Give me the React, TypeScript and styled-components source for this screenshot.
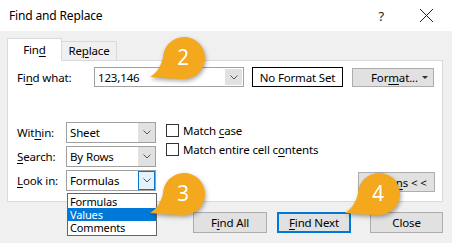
import styled, { createGlobalStyle } from "styled-components";

const GlobalStyle = createGlobalStyle`
  html, body {
    margin: 0;
    padding: 0;
    background: #f0f0f0;
  }
`;

const Window = styled.div`
  position: relative;
  width: 452px;
  height: 243px;
  overflow: hidden;
  background: #f0f0f0;
  font-family: "Noto Sans", "Open Sans", sans-serif;
  font-size: 11.5px;
  letter-spacing: -0.15px;
  color: #000;
`;

const TitleBar = styled.div`
  display: flex;
  align-items: center;
  height: 31px;
  padding: 0 18px 0 9px;
  background: #fff;
`;

const TitleText = styled.span`
  font-size: 12px;
`;

const TitleControls = styled.div`
  display: flex;
  align-items: center;
  gap: 35px;
  margin-left: auto;
  font-size: 13px;
  color: #222;
`;

const Main = styled.div`
  padding: 7px 0 0 7px;
`;

const TabStrip = styled.div`
  display: flex;
  align-items: flex-end;
  height: 22px;
`;

const Tab = styled.div<{ $active?: boolean }>`
  position: relative;
  z-index: ${(p) => (p.$active ? 2 : 1)};
  box-sizing: border-box;
  width: 55px;
  height: ${(p) => (p.$active ? "23px" : "19px")};
  margin-bottom: ${(p) => (p.$active ? "-1px" : "0")};
  padding-top: ${(p) => (p.$active ? "3px" : "1px")};
  text-align: center;
  background: ${(p) => (p.$active ? "#fff" : "#f0f0f0")};
  border: 1px solid #d9d9d9;
  border-bottom: none;
  border-left: ${(p) => (p.$active ? "1px solid #d9d9d9" : "none")};
`;

const Panel = styled.div`
  box-sizing: border-box;
  display: flex;
  flex-direction: column;
  width: 436px;
  height: 142px;
  padding: 6px 7px 9px 9px;
  background: #fff;
  border: 1px solid #d9d9d9;
`;

const FindRow = styled.div`
  display: flex;
  align-items: center;
  height: 20px;
`;

const Label = styled.span<{ $w: number }>`
  width: ${(p) => p.$w}px;
  flex-shrink: 0;
`;

const U = styled.span`
  text-decoration: underline;
  text-underline-offset: 2px;
`;

const Combo = styled.div<{ $w: number; $h: number }>`
  box-sizing: border-box;
  display: flex;
  align-items: stretch;
  width: ${(p) => p.$w}px;
  height: ${(p) => p.$h}px;
  background: #fff;
  border: 1px solid #a0a0a0;
`;

const ComboText = styled.span`
  flex: 1;
  display: flex;
  align-items: center;
  padding-left: 3px;
`;

const ArrowBox = styled.span<{ $open?: boolean; $inset?: boolean }>`
  box-sizing: border-box;
  display: flex;
  align-items: center;
  justify-content: center;
  width: 17px;
  margin: ${(p) => (p.$inset ? "1px" : "0")};
  background: ${(p) => (p.$open ? "#e5f1fb" : "#e1e1e1")};
  border: 1px solid ${(p) => (p.$open ? "#0078d7" : "#e1e1e1")};
`;

const FormatBox = styled.div`
  box-sizing: border-box;
  display: flex;
  align-items: center;
  justify-content: center;
  width: 91px;
  height: 20px;
  margin-left: 8px;
  border: 1px solid #000;
`;

const FormatButton = styled.div`
  box-sizing: border-box;
  display: flex;
  align-items: center;
  width: 82px;
  height: 19px;
  margin-left: 9px;
  padding-left: 18px;
  background: #e1e1e1;
  border: 1px solid #adadad;
`;

const Caret = styled.span`
  margin-left: auto;
  margin-right: 5px;
  width: 0;
  height: 0;
  border-left: 3px solid transparent;
  border-right: 3px solid transparent;
  border-top: 3px solid #333;
`;

const Lower = styled.div`
  display: flex;
  flex: 1;
  margin-top: 35px;
`;

const SelectGrid = styled.div`
  display: grid;
  grid-template-columns: 49px 90px;
  grid-auto-rows: 21px;
  row-gap: 3px;
  align-items: center;
`;

const SelectWrap = styled.div`
  position: relative;
  height: 21px;
`;

const DropList = styled.div`
  position: absolute;
  z-index: 5;
  top: calc(100% + 2px);
  left: 1px;
  box-sizing: border-box;
  width: 90px;
  padding: 1px 0;
  background: #fff;
  border: 1px solid #646464;
`;

const DropItem = styled.div<{ $selected?: boolean }>`
  height: 13px;
  line-height: 13px;
  padding-left: 2px;
  font-size: 11px;
  overflow: hidden;
  background: ${(p) => (p.$selected ? "#0078d7" : "transparent")};
  color: ${(p) => (p.$selected ? "#fff" : "#000")};
`;

const Checks = styled.div`
  display: flex;
  flex-direction: column;
  gap: 6px;
  margin-left: 10px;
  padding-top: 2px;
`;

const CheckRow = styled.label`
  display: flex;
  align-items: center;
  gap: 4px;
  height: 13px;
`;

const Box = styled.span`
  box-sizing: border-box;
  width: 13px;
  height: 13px;
  background: #fff;
  border: 1px solid #333;
`;

const Button = styled.div<{ $w: number; $default?: boolean; $gapLeft?: number }>`
  box-sizing: border-box;
  display: flex;
  align-items: center;
  justify-content: center;
  width: ${(p) => p.$w}px;
  height: 21px;
  margin-left: ${(p) => p.$gapLeft ?? 0}px;
  background: #e1e1e1;
  border: ${(p) => (p.$default ? "2px solid #0078d7" : "1px solid #adadad")};
`;

const OptionsButton = styled(Button)`
  align-self: flex-end;
  margin-left: auto;
  height: 20px;
`;

const ButtonRow = styled.div`
  display: flex;
  justify-content: flex-end;
  margin-top: 10px;
  padding-right: 9px;
`;

const CalloutWrap = styled.div<{ $x: number; $y: number }>`
  position: absolute;
  z-index: 10;
  left: ${(p) => p.$x}px;
  top: ${(p) => p.$y}px;
  width: 60px;
  height: 50px;
  filter: drop-shadow(1px 2px 2px rgba(0, 0, 0, 0.35));
`;

const Chevron = () => (
  <svg width="8" height="5" viewBox="0 0 8 5">
    <polyline points="0.5,0.5 4,4 7.5,0.5" fill="none" stroke="#555" strokeWidth="1" />
  </svg>
);

const Callout = ({ n, x, y }: { n: string; x: number; y: number }) => (
  <CalloutWrap $x={x} $y={y}>
    <svg width="60" height="50" viewBox="0 0 60 50">
      <path
        d="M2 43 C10 38 13 31 15 24 A21 21 0 1 1 37 45 C26 45 12 44 2 43 Z"
        fill="#f3a81d"
      />
      <text
        x="35"
        y="31"
        textAnchor="middle"
        fill="#fff"
        fontSize="21"
        fontFamily="Noto Sans, sans-serif"
      >
        {n}
      </text>
    </svg>
  </CalloutWrap>
);

const Select = ({ value, open }: { value: string; open?: boolean }) => (
  <Combo $w={90} $h={21}>
    <ComboText>{value}</ComboText>
    <ArrowBox $open={open}>
      <Chevron />
    </ArrowBox>
  </Combo>
);

export default function App() {
  return (
    <Window>
      <GlobalStyle />
      <TitleBar>
        <TitleText>Find and Replace</TitleText>
        <TitleControls>
          <span>?</span>
          <svg width="15" height="15" viewBox="0 0 15 15">
            <path d="M1 1 L14 14 M14 1 L1 14" stroke="#222" strokeWidth="1" />
          </svg>
        </TitleControls>
      </TitleBar>

      <Main>
        <TabStrip>
          <Tab $active>
            Fin<U>d</U>
          </Tab>
          <Tab>
            Re<U>p</U>lace
          </Tab>
        </TabStrip>

        <Panel>
          <FindRow>
            <Label $w={77}>
              Fi<U>n</U>d what:
            </Label>
            <Combo $w={150} $h={20}>
              <ComboText>123,146</ComboText>
              <ArrowBox $inset>
                <Chevron />
              </ArrowBox>
            </Combo>
            <FormatBox>No Format Set</FormatBox>
            <FormatButton>
              <span>
                For<U>m</U>at...
              </span>
              <Caret />
            </FormatButton>
          </FindRow>

          <Lower>
            <SelectGrid>
              <Label $w={49}>
                Wit<U>h</U>in:
              </Label>
              <SelectWrap>
                <Select value="Sheet" />
              </SelectWrap>
              <Label $w={49}>
                <U>S</U>earch:
              </Label>
              <SelectWrap>
                <Select value="By Rows" />
              </SelectWrap>
              <Label $w={49}>
                <U>L</U>ook in:
              </Label>
              <SelectWrap>
                <Select value="Formulas" open />
                <DropList>
                  <DropItem>Formulas</DropItem>
                  <DropItem $selected>Values</DropItem>
                  <DropItem>Comments</DropItem>
                </DropList>
              </SelectWrap>
            </SelectGrid>

            <Checks>
              <CheckRow>
                <Box />
                <span>
                  Match <U>c</U>ase
                </span>
              </CheckRow>
              <CheckRow>
                <Box />
                <span>
                  Match entire cell c<U>o</U>ntents
                </span>
              </CheckRow>
            </Checks>

            <OptionsButton $w={77}>
              Optio<U>n</U>s &lt; &lt;
            </OptionsButton>
          </Lower>
        </Panel>
      </Main>

      <ButtonRow>
        <Button $w={74}>
          F<U>i</U>nd All
        </Button>
        <Button $w={74} $default $gapLeft={10}>
          <U>F</U>ind Next
        </Button>
        <Button $w={73} $gapLeft={19}>
          Close
        </Button>
      </ButtonRow>

      <Callout n="2" x={148} y={34} />
      <Callout n="3" x={148} y={170} />
      <Callout n="4" x={343} y={170} />
    </Window>
  );
}
